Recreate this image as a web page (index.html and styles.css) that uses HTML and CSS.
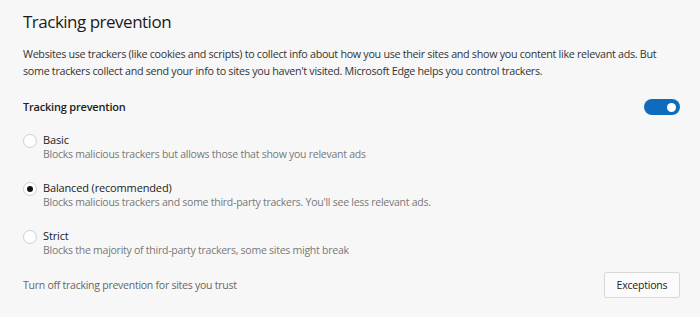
FILE: index.html
```html
<!DOCTYPE html>
<html>
<head>
<meta charset="utf-8">
<link rel="stylesheet" href="styles.css">
</head>
<body>
<main class="page">
  <h1 class="title">Tracking prevention</h1>
  <p class="intro">Websites use trackers (like cookies and scripts) to collect info about how you use their sites and show you content like relevant ads. But<br>some trackers collect and send your info to sites you haven't visited. Microsoft Edge helps you control trackers.</p>
  <div class="row toggle-row">
    <h2 class="subhead">Tracking prevention</h2>
    <span class="toggle"><span class="knob"></span></span>
  </div>
  <ul class="options">
    <li class="option">
      <span class="radio"></span>
      <div class="opt-text">
        <div class="opt-label">Basic</div>
        <div class="opt-desc">Blocks malicious trackers but allows those that show you relevant ads</div>
      </div>
    </li>
    <li class="option">
      <span class="radio checked"></span>
      <div class="opt-text">
        <div class="opt-label">Balanced (recommended)</div>
        <div class="opt-desc">Blocks malicious trackers and some third-party trackers. You'll see less relevant ads.</div>
      </div>
    </li>
    <li class="option">
      <span class="radio"></span>
      <div class="opt-text">
        <div class="opt-label">Strict</div>
        <div class="opt-desc">Blocks the majority of third-party trackers, some sites might break</div>
      </div>
    </li>
  </ul>
  <div class="row footer">
    <span class="footer-text">Turn off tracking prevention for sites you trust</span>
    <button class="btn">Exceptions</button>
  </div>
</main>
</body>
</html>
```
FILE: styles.css
```css
html, body {
  margin: 0;
  padding: 0;
  background: #f7f7f7;
}
body {
  font-family: "Open Sans", "Noto Sans", sans-serif;
  color: #1f1f1f;
}
.page {
  padding: 10px 20px 0 23px;
  width: 657px;
  box-sizing: content-box;
}
.title {
  margin: 0;
  font-size: 17px;
  letter-spacing: -0.5px;
  font-weight: 400;
  line-height: 24px;
  color: #1b1b1b;
}
.intro {
  margin: 12px 0 0;
  font-size: 10.75px;
  letter-spacing: -0.3px;
  line-height: 17px;
  color: #333;
}
.row {
  display: flex;
  align-items: center;
  justify-content: space-between;
}
.toggle-row {
  margin-top: 19px;
}
.subhead {
  margin: 0;
  font-size: 11px;
  letter-spacing: -0.2px;
  font-weight: 600;
  line-height: 16px;
  color: #222;
}
.toggle {
  width: 36px;
  height: 16px;
  border-radius: 8px;
  background: #0f6cbd;
  display: flex;
  align-items: center;
  justify-content: flex-end;
  padding-right: 4px;
  box-sizing: border-box;
}
.knob {
  width: 9px;
  height: 9px;
  border-radius: 50%;
  background: #fff;
}
.options {
  list-style: none;
  margin: 18px 0 0;
  padding: 0;
  display: flex;
  flex-direction: column;
  gap: 20px;
}
.option {
  display: flex;
  align-items: flex-start;
  gap: 6px;
}
.radio {
  flex: none;
  width: 14px;
  height: 14px;
  border: 1px solid #cfcfcf;
  border-radius: 50%;
  background: #fff;
  box-sizing: border-box;
  margin-top: 1px;
  display: flex;
  align-items: center;
  justify-content: center;
}
.radio.checked::after {
  content: "";
  width: 6px;
  height: 6px;
  border-radius: 50%;
  background: #111;
}
.opt-label {
  font-size: 11px;
  letter-spacing: -0.15px;
  line-height: 14px;
  color: #222;
}
.opt-desc {
  font-size: 10.5px;
  letter-spacing: -0.25px;
  line-height: 14px;
  color: #777;
}
.footer {
  margin-top: 15px;
}
.footer-text {
  font-size: 10.5px;
  letter-spacing: -0.25px;
  line-height: 14px;
  color: #666;
}
.btn {
  font-family: inherit;
  font-size: 10.5px;
  letter-spacing: -0.2px;
  width: 76px;
  height: 26px;
  padding: 0;
  background: #fbfbfb;
  border: 1px solid #d8d8d8;
  border-radius: 2px;
  color: #222;
}
```
